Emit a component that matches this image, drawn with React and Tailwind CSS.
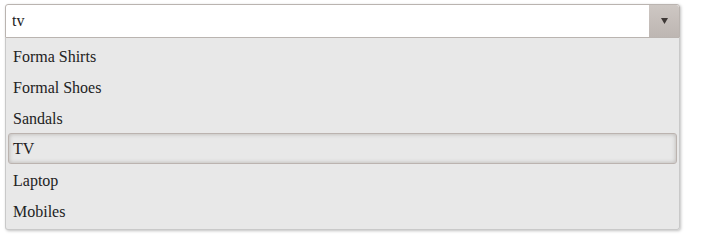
import React, { useState } from "react";

const items = ["Forma Shirts", "Formal Shoes", "Sandals", "TV", "Laptop", "Mobiles"];

function App() {
  const [value, setValue] = useState("tv");
  const [active, setActive] = useState("TV");

  return (
    <div className="min-h-screen bg-white pt-[4px] pl-[5px] font-['Liberation_Serif',serif]">
      <div className="w-[675px] rounded-[3px] shadow-[1px_1px_3px_rgba(0,0,0,0.25)]">
        <div className="flex h-[34px] rounded-t-[3px] border border-[#bab4b0] bg-white">
          <input
            value={value}
            onChange={(e) => setValue(e.target.value)}
            className="flex-1 bg-transparent pl-[6px] text-[16px] text-[#222] outline-none"
          />
          <button className="flex w-[30px] items-center justify-center rounded-tr-[3px] bg-gradient-to-b from-[#cdc7c3] to-[#bdb6b2]">
            <svg width="7" height="6" viewBox="0 0 7 6">
              <path d="M0 0 H7 L3.5 6 Z" fill="#3e3836" />
            </svg>
          </button>
        </div>
        <ul className="rounded-b-[3px] border border-t-0 border-[#c9c9c9] bg-[#e8e8e8] px-[2px] pt-[2px] pb-[3px]">
          {items.map((item) => (
            <li
              key={item}
              onClick={() => setActive(item)}
              className={
                item === active
                  ? "flex h-[31px] items-center rounded-[3px] border border-[#bbb3af] px-[4px] pt-[1px] text-[16px] text-[#222] shadow-[inset_0_0_4px_rgba(120,110,105,0.45)]"
                  : "flex h-[31px] items-center border border-transparent px-[4px] pt-[2px] text-[16px] text-[#222]"
              }
            >
              {item}
            </li>
          ))}
        </ul>
      </div>
    </div>
  );
}

export default App;
